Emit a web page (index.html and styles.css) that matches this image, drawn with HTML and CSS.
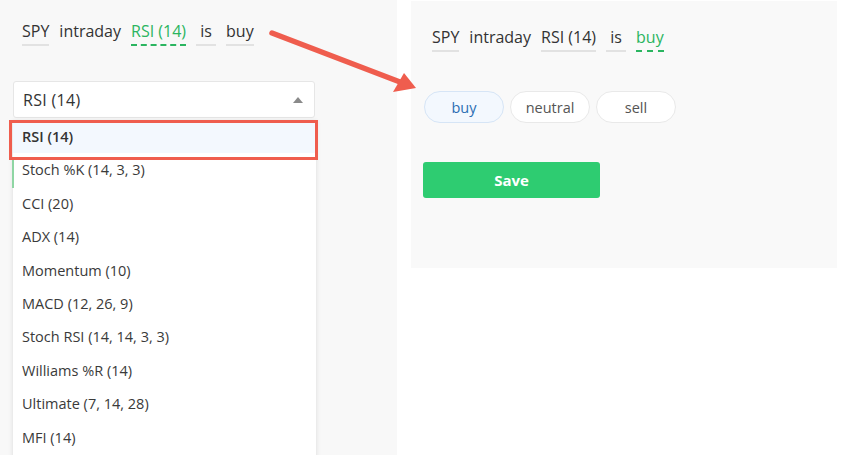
FILE: index.html
```html
<!DOCTYPE html>
<html>
<head>
<meta charset="utf-8">
<link rel="stylesheet" href="styles.css">
</head>
<body>
<div class="page">
  <div class="left">
    <div class="sentence">
      <span class="word ul">SPY</span>
      <span class="word">intraday</span>
      <span class="word active">RSI (14)</span>
      <span class="word ul short">is</span>
      <span class="word ul">buy</span>
    </div>
    <div class="select">
      <span>RSI (14)</span>
      <span class="caret"></span>
    </div>
    <div class="menu">
      <div class="item selected">RSI (14)</div>
      <div class="item">Stoch %K (14, 3, 3)</div>
      <div class="item">CCI (20)</div>
      <div class="item">ADX (14)</div>
      <div class="item">Momentum (10)</div>
      <div class="item">MACD (12, 26, 9)</div>
      <div class="item">Stoch RSI (14, 14, 3, 3)</div>
      <div class="item">Williams %R (14)</div>
      <div class="item">Ultimate (7, 14, 28)</div>
      <div class="item">MFI (14)</div>
    </div>
    <div class="highlight"></div>
    <div class="greenbar"></div>
  </div>
  <div class="right">
    <div class="sentence">
      <span class="word ul">SPY</span>
      <span class="word">intraday</span>
      <span class="word ul">RSI (14)</span>
      <span class="word ul short">is</span>
      <span class="word active">buy</span>
    </div>
    <div class="pills">
      <button class="pill on">buy</button>
      <button class="pill">neutral</button>
      <button class="pill">sell</button>
    </div>
    <button class="save">Save</button>
  </div>
</div>
<svg class="arrow" width="850" height="455" viewBox="0 0 850 455">
  <line x1="272" y1="33" x2="400" y2="82" stroke="#ef5d4e" stroke-width="5.5" stroke-linecap="round"/>
  <polygon points="393,92 404,73 416,88" fill="#ef5d4e"/>
</svg>
</body>
</html>
```
FILE: styles.css
```css
html, body {
  margin: 0;
  padding: 0;
  background: #ffffff;
}
body {
  font-family: "Open Sans", "Liberation Sans", sans-serif;
  color: #333;
  width: 850px;
  height: 455px;
  overflow: hidden;
  position: relative;
}
.page {
  display: flex;
  gap: 14px;
  height: 455px;
}
.left {
  width: 397px;
  background: #f8f8f8;
  padding: 20px 0 0 13px;
  box-sizing: border-box;
  position: relative;
}
.right {
  width: 426px;
  height: 267px;
  margin-top: 1px;
  background: #f9f9f9;
  padding: 25px 0 0 12px;
  box-sizing: border-box;
}
.sentence {
  display: flex;
  gap: 10px;
  padding-left: 9px;
  font-size: 16px;
  line-height: 22px;
}
.word {
  padding-bottom: 2px;
  border-bottom: 2px solid transparent;
  text-align: center;
}
.word.short {
  min-width: 20px;
}
.word.ul {
  border-bottom-color: #e2e2e2;
}
.word.active {
  color: #2bb560;
  border-bottom: 2px dashed #2bb560;
}
.select {
  margin-top: 35px;
  width: 302px;
  height: 37px;
  box-sizing: border-box;
  background: #fff;
  border: 1px solid #e6e6e6;
  border-radius: 3px;
  display: flex;
  align-items: center;
  justify-content: space-between;
  padding: 0 11px 0 9px;
  font-size: 16px;
  letter-spacing: 0.3px;
}
.caret {
  width: 0;
  height: 0;
  border-left: 5px solid transparent;
  border-right: 5px solid transparent;
  border-bottom: 6px solid #8a8a8a;
}
.menu {
  margin-top: 2px;
  width: 303px;
  background: #fff;
  box-shadow: 0 1px 5px rgba(0,0,0,0.12);
  height: 340px;
}
.item {
  height: 33.4px;
  line-height: 34px;
  padding-left: 9px;
  font-size: 14.5px;
  color: #3a3a3a;
}
.item.selected {
  background: #f3f8fe;
  font-weight: 600;
  color: #333;
}
.highlight {
  position: absolute;
  left: 9px;
  top: 120px;
  width: 309px;
  height: 40px;
  box-sizing: border-box;
  border: 3px solid #ef5d4e;
}
.greenbar {
  position: absolute;
  left: 12px;
  top: 160px;
  width: 2px;
  height: 28px;
  background: #8fd6a4;
}
.pills {
  margin-top: 39px;
  display: flex;
  gap: 6px;
  padding-left: 1px;
}
.pill {
  width: 80px;
  height: 32px;
  border-radius: 16px;
  border: 1px solid #e9e9e9;
  background: #fff;
  color: #555;
  font-family: inherit;
  font-size: 14.5px;
  padding: 0;
}
.pill.on {
  background: #f3f8fe;
  border-color: #d6e5f6;
  color: #2b6eb3;
}
.save {
  display: block;
  margin-top: 39px;
  width: 177px;
  height: 36px;
  border: none;
  border-radius: 3px;
  background: #2ecc71;
  color: #fff;
  font-family: inherit;
  font-weight: 700;
  font-size: 15px;
  padding: 0;
}
.arrow {
  position: absolute;
  left: 0;
  top: 0;
  pointer-events: none;
}
```
